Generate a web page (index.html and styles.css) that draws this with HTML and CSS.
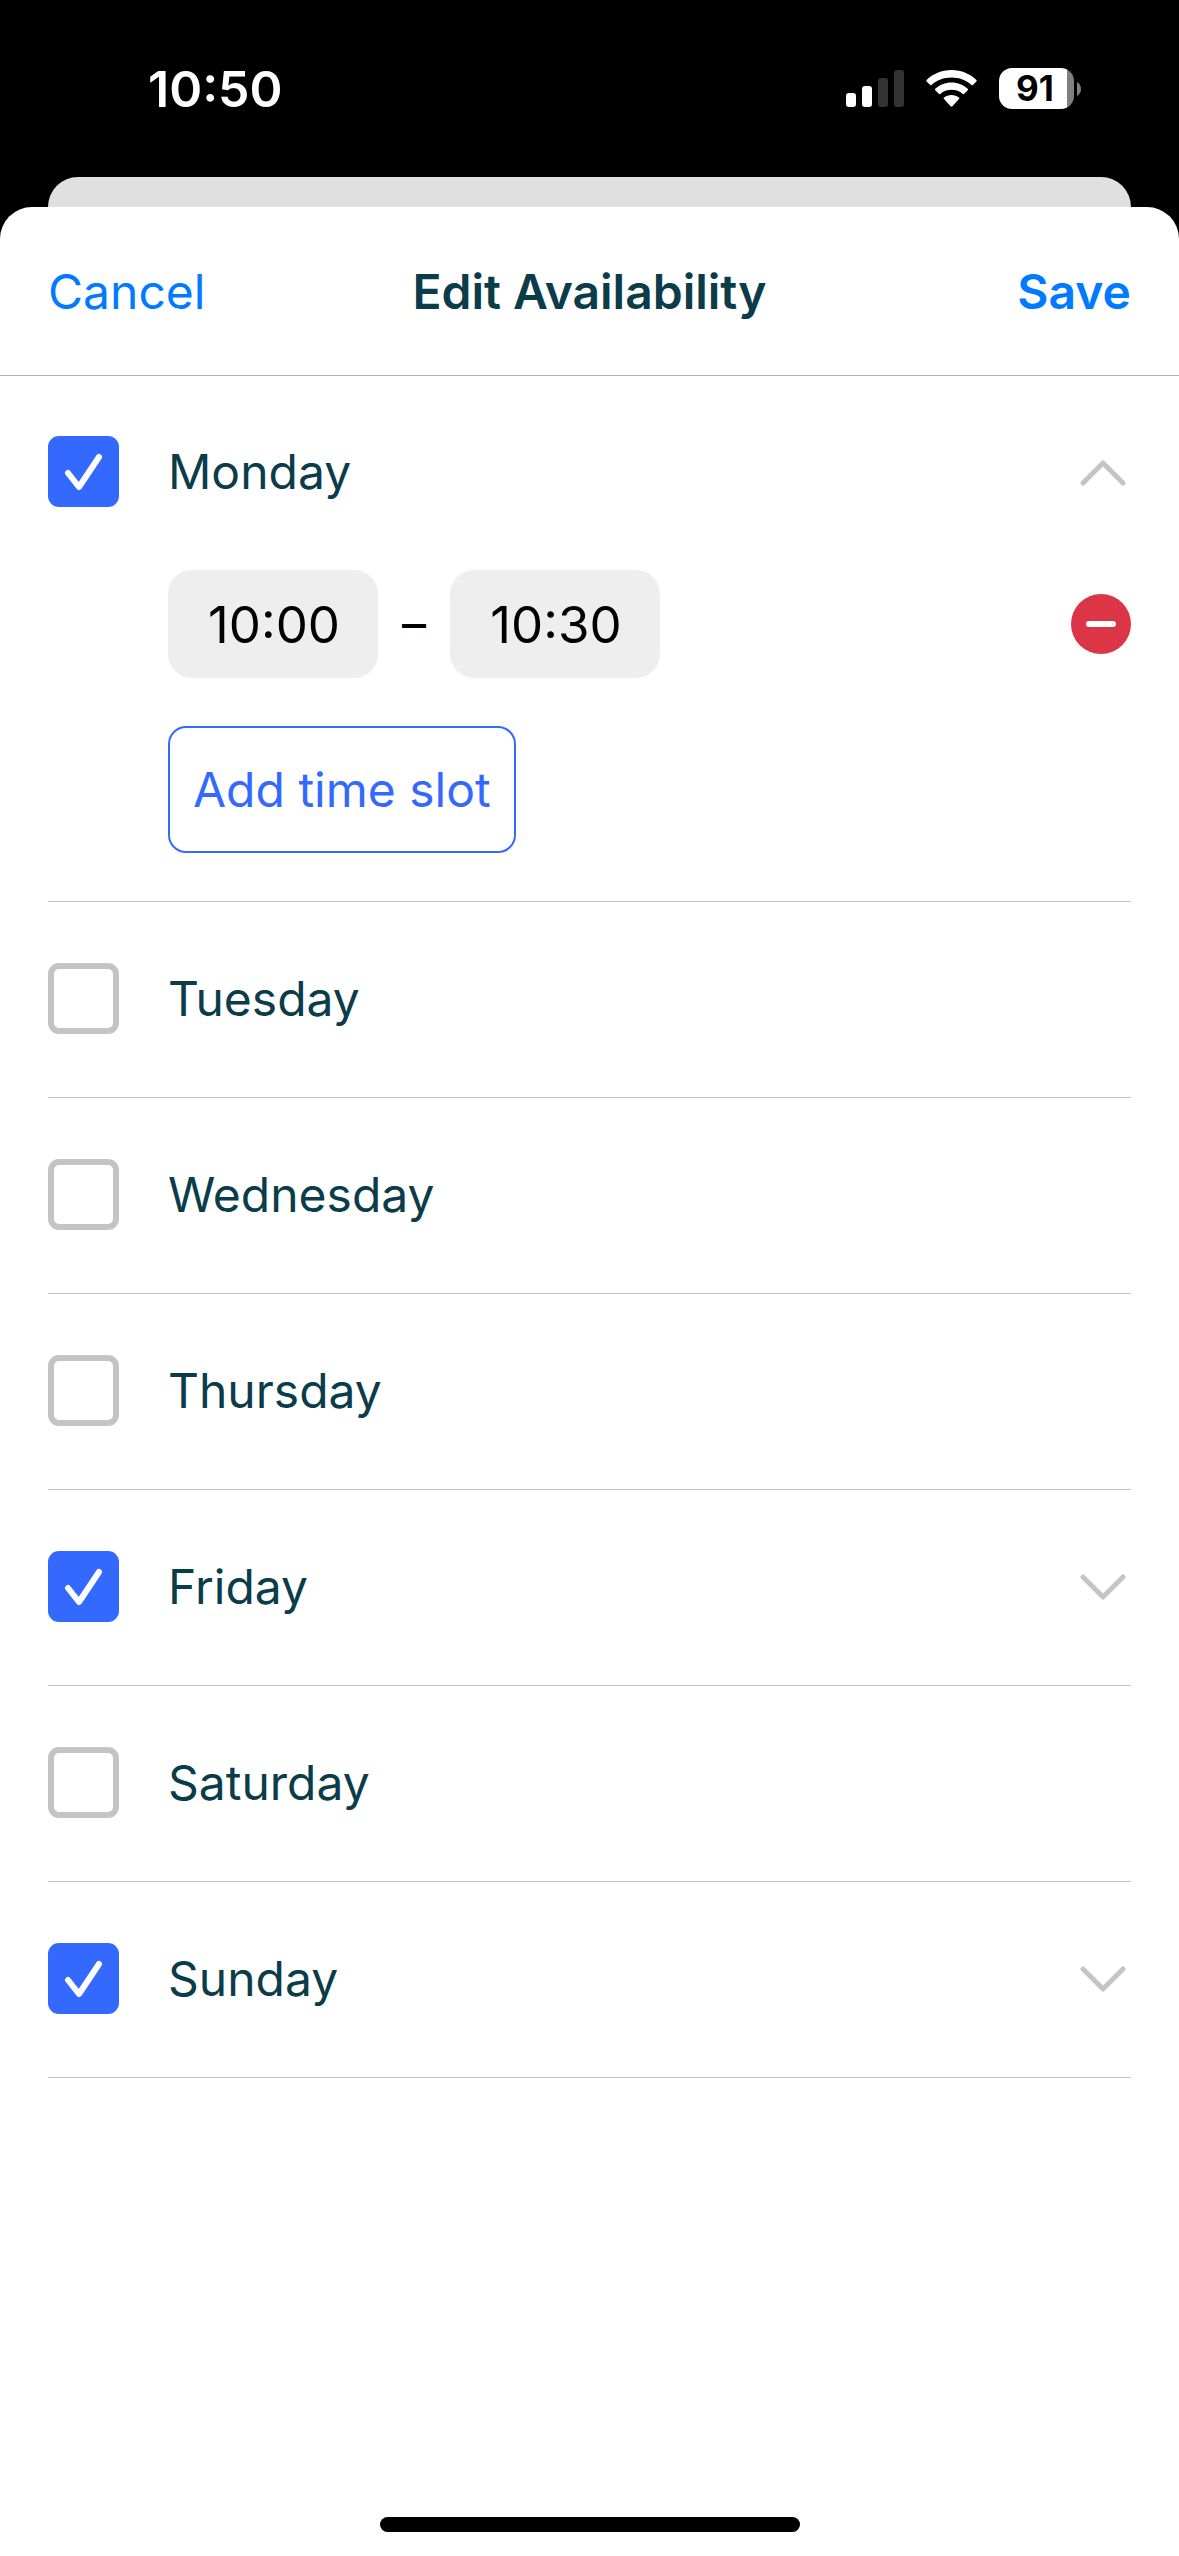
FILE: index.html
```html
<!DOCTYPE html>
<html lang="en">
<head>
    <meta charset="UTF-8">
    <meta name="viewport" content="width=device-width, initial-scale=1.0">
    <title>Edit Availability</title>
    <link rel="stylesheet" href="styles.css">
</head>
<body>
    <div class="status-bar">
        <span class="status-time">10:50</span>
        <div class="status-icons">
            <svg class="signal" width="58" height="37" viewBox="0 0 58 37">
                <rect x="0" y="23" width="10" height="14" rx="3" fill="#fff"/>
                <rect x="16" y="16" width="10" height="21" rx="3" fill="#fff"/>
                <rect x="32" y="8" width="10" height="29" rx="3" fill="#333"/>
                <rect x="48" y="0" width="10" height="37" rx="3" fill="#333"/>
            </svg>
            <svg class="wifi" width="51" height="37" viewBox="0 0 51 37" fill="#fff">
                <path d="M25.500 0C35.500 0 44.200 3.800 50.400 10.100Q51 10.800 50.400 11.500L46.900 15Q46.200 15.600 45.500 15C40.200 10.200 33.300 7.500 25.500 7.500S10.800 10.200 5.500 15Q4.800 15.600 4.100 15L.6 11.500Q0 10.800 .6 10.100C6.800 3.800 15.500 0 25.500 0Z"/>
                <path d="M25.500 12.500C31.800 12.500 37.500 14.900 41.700 18.800Q42.400 19.500 41.700 20.200L38 23.900Q37.400 24.500 36.700 23.900C33.700 21.300 29.800 19.800 25.500 19.800S17.300 21.300 14.300 23.900Q13.600 24.500 13 23.900L9.300 20.200Q8.600 19.500 9.300 18.800C13.500 14.900 19.200 12.500 25.500 12.500Z"/>
                <path d="M25.500 25C28.400 25 31 26 33 27.600Q33.700 28.300 33 29L26.400 36.300Q25.500 37.200 24.600 36.300L18 29Q17.300 28.300 18 27.600C20 26 22.600 25 25.500 25Z"/>
            </svg>
            <div class="battery">
                <span class="battery-level">91</span>
                <svg width="4" height="14" viewBox="0 0 4 14" fill="#808080">
                    <path d="M0 0C2.500 1.500 4 4 4 7S2.500 12.500 0 14Z"/>
                </svg>
            </div>
        </div>
    </div>

    <div class="back-sheet"></div>

    <main class="sheet">
        <header class="nav">
            <button class="nav-btn cancel" type="button">Cancel</button>
            <h1>Edit Availability</h1>
            <button class="nav-btn save" type="button">Save</button>
        </header>

        <ul class="days">
            <li class="day open">
                <div class="day-row">
                    <label class="day-label">
                        <span class="check">
                            <input type="checkbox" checked>
                            <svg viewBox="0 0 71 71"><path d="M20 37L31 51L51 21"/></svg>
                        </span>
                        Monday
                    </label>
                    <button class="toggle" type="button" aria-label="Collapse Monday">
                        <svg viewBox="0 0 56 56"><path d="M8 39L28 19L48 39"/></svg>
                    </button>
                </div>
                <div class="slots">
                    <div class="slot">
                        <input class="time" type="text" value="10:00" aria-label="Start time">
                        <span class="dash">–</span>
                        <input class="time" type="text" value="10:30" aria-label="End time">
                        <button class="remove" type="button" aria-label="Remove time slot">
                            <svg viewBox="0 0 60 60"><path d="M18 30H42"/></svg>
                        </button>
                    </div>
                    <button class="add-slot" type="button">Add time slot</button>
                </div>
            </li>
            <li class="day">
                <div class="day-row">
                    <label class="day-label">
                        <span class="check"><input type="checkbox"></span>
                        Tuesday
                    </label>
                </div>
            </li>
            <li class="day">
                <div class="day-row">
                    <label class="day-label">
                        <span class="check"><input type="checkbox"></span>
                        Wednesday
                    </label>
                </div>
            </li>
            <li class="day">
                <div class="day-row">
                    <label class="day-label">
                        <span class="check"><input type="checkbox"></span>
                        Thursday
                    </label>
                </div>
            </li>
            <li class="day">
                <div class="day-row">
                    <label class="day-label">
                        <span class="check">
                            <input type="checkbox" checked>
                            <svg viewBox="0 0 71 71"><path d="M20 37L31 51L51 21"/></svg>
                        </span>
                        Friday
                    </label>
                    <button class="toggle" type="button" aria-label="Expand Friday">
                        <svg viewBox="0 0 56 56"><path d="M8 18L28 38L48 18"/></svg>
                    </button>
                </div>
            </li>
            <li class="day">
                <div class="day-row">
                    <label class="day-label">
                        <span class="check"><input type="checkbox"></span>
                        Saturday
                    </label>
                </div>
            </li>
            <li class="day">
                <div class="day-row">
                    <label class="day-label">
                        <span class="check">
                            <input type="checkbox" checked>
                            <svg viewBox="0 0 71 71"><path d="M20 37L31 51L51 21"/></svg>
                        </span>
                        Sunday
                    </label>
                    <button class="toggle" type="button" aria-label="Expand Sunday">
                        <svg viewBox="0 0 56 56"><path d="M8 18L28 38L48 18"/></svg>
                    </button>
                </div>
            </li>
        </ul>

        <div class="home-indicator"></div>
    </main>
</body>
</html>
```
FILE: styles.css
```css
* {
    margin: 0;
    padding: 0;
    box-sizing: border-box;
}

body {
    background: #000;
    min-height: 100vh;
    display: flex;
    flex-direction: column;
    font-family: Inter, "Liberation Sans", sans-serif;
    font-size: 48px;
    line-height: 60px;
    color: #0b3c49;
}

button,
input {
    font: inherit;
    color: inherit;
    border: none;
    background: none;
}

button {
    cursor: pointer;
}

svg {
    display: block;
}

/* status bar */
.status-bar {
    height: 177px;
    padding: 0 98px 0 148px;
    display: flex;
    align-items: center;
    justify-content: space-between;
    color: #fff;
}

.status-time {
    font-size: 50px;
    font-weight: 600;
}

.status-icons {
    display: flex;
    align-items: center;
    gap: 22px;
}

.battery {
    display: flex;
    align-items: center;
    gap: 3px;
}

.battery-level {
    width: 75px;
    height: 41px;
    padding-right: 3px;
    border-radius: 13px;
    background: linear-gradient(90deg, #fff 68px, #808080 68px);
    color: #000;
    font-size: 35px;
    font-weight: 700;
    line-height: 41px;
    text-align: center;
}

/* sheets */
.back-sheet {
    height: 30px;
    margin: 0 48px;
    border-radius: 30px 30px 0 0;
    background: #e0e0e0;
}

.sheet {
    flex: 1;
    display: flex;
    flex-direction: column;
    border-radius: 32px 32px 0 0;
    background: #fff;
}

.nav {
    display: grid;
    grid-template-columns: 1fr auto 1fr;
    align-items: center;
    height: 169px;
    padding: 2px 48px 0;
    border-bottom: 1px solid #b2b2b2;
}

.nav h1 {
    font-size: 48px;
    font-weight: 600;
}

.nav-btn {
    font-size: 48px;
    color: #007aff;
}

.cancel {
    justify-self: start;
}

.save {
    justify-self: end;
    font-weight: 600;
}

/* days */
.days {
    list-style: none;
    padding: 0 48px;
}

.day {
    padding: 61px 0 63px;
    border-bottom: 1px solid #c4c4c4;
}

.day.open {
    padding: 60px 0 48px;
}

.day-row {
    display: flex;
    align-items: center;
    justify-content: space-between;
}

.day-label {
    display: flex;
    align-items: center;
    gap: 49px;
}

.check {
    display: grid;
}

.check input,
.check svg {
    grid-area: 1 / 1;
    width: 71px;
    height: 71px;
}

.check input {
    appearance: none;
    border: 6px solid #c4c4c4;
    border-radius: 11px;
}

.check input:checked {
    border-color: #3369ff;
    background: #3369ff;
}

.check svg {
    pointer-events: none;
    fill: none;
    stroke: #fff;
    stroke-width: 6;
    stroke-linecap: round;
    stroke-linejoin: round;
}

.toggle {
    width: 56px;
    height: 56px;
}

.toggle svg {
    fill: none;
    stroke: #c4c4c4;
    stroke-width: 5;
    stroke-linecap: round;
    stroke-linejoin: round;
}

.slots {
    margin-top: 63px;
    padding-left: 120px;
}

.slot {
    display: flex;
    align-items: center;
    margin-bottom: 48px;
    color: #000;
}

.time {
    width: 210px;
    height: 108px;
    padding-left: 2px;
    border-radius: 24px;
    background: #eee;
    font-size: 51px;
    text-align: center;
}

.dash {
    width: 72px;
    text-align: center;
}

.remove {
    width: 60px;
    height: 60px;
    margin-left: auto;
    border-radius: 50%;
    background: #dc3545;
}

.remove svg {
    fill: none;
    stroke: #fff;
    stroke-width: 6;
    stroke-linecap: round;
}

.add-slot {
    display: block;
    height: 127px;
    padding: 0 23px;
    border: 2px solid #3369ff;
    border-radius: 18px;
    color: #3369ff;
}

.home-indicator {
    width: 420px;
    height: 15px;
    margin: auto auto 24px;
    border-radius: 8px;
    background: #000;
}
```
